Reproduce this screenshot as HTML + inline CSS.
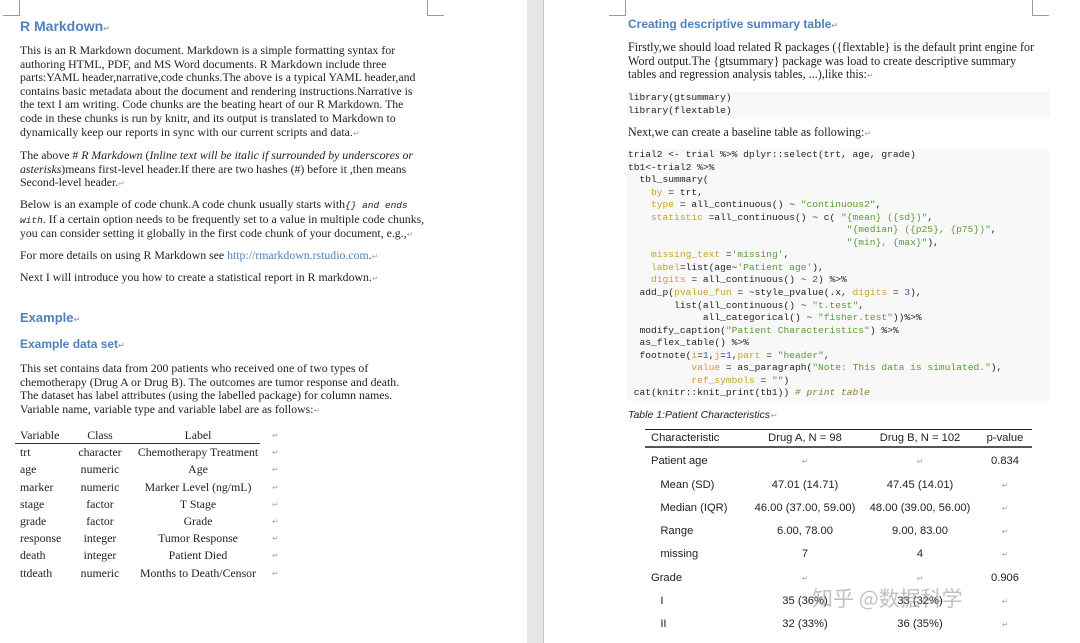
<!DOCTYPE html>
<html><head><meta charset="utf-8"><style>
*{margin:0;padding:0;box-sizing:border-box}
body{width:1080px;height:643px;overflow:hidden;background:#fff;position:relative;font-family:"Liberation Serif",serif;color:#222}
.a{position:absolute;white-space:nowrap}
.p{font-size:11.8px;line-height:13.6px;color:#222}
.r{font-size:12.1px}
h1,h2{position:absolute;font-family:"Liberation Sans",sans-serif;color:#4f81bd;font-weight:bold}
.m{color:#aaa;font-size:8px}
.code{position:absolute;background:#f8f8f8;font-family:"Liberation Mono",monospace;font-size:9.6px;line-height:12.55px;color:#222;white-space:pre;padding-left:1px}
.y{color:#c9a227}.g{color:#5a9a3a}.b{color:#3050c0}.c{color:#8a7a30;font-style:italic}
.s{font-family:"Liberation Sans",sans-serif;font-size:11.2px;color:#222}
</style></head><body>
<div class="a" style="left:527px;top:0;width:16px;height:643px;background:#e6e6e6"></div>
<div class="a" style="left:543px;top:0;width:1px;height:643px;background:#c8c8c8"></div>
<div class="a" style="left:19px;top:0;width:1px;height:16px;background:#999"></div>
<div class="a" style="left:3px;top:15px;width:17px;height:1px;background:#999"></div>
<div class="a" style="left:427px;top:0;width:1px;height:16px;background:#999"></div>
<div class="a" style="left:427px;top:15px;width:17px;height:1px;background:#999"></div>
<div class="a" style="left:625px;top:0;width:1px;height:16px;background:#999"></div>
<div class="a" style="left:609px;top:15px;width:17px;height:1px;background:#999"></div>
<div class="a" style="left:1032px;top:0;width:1px;height:16px;background:#999"></div>
<div class="a" style="left:1032px;top:15px;width:17px;height:1px;background:#999"></div>

<h1 style="left:20px;top:18px;font-size:14px">R Markdown<span class="m">↵</span></h1>
<div class="a p" style="left:20px;top:44px">This is an R Markdown document. Markdown is a simple formatting syntax for<br>authoring HTML, PDF, and MS Word documents. R Markdown include three<br>parts:YAML header,narrative,code chunks.The above is a typical YAML header,and<br>contains basic metadata about the document and rendering instructions.Narrative is<br>the text I am writing. Code chunks are the beating heart of our R Markdown. The<br>code in these chunks is run by knitr, and its output is translated to Markdown to<br>dynamically keep our reports in sync with our current scripts and data.<span class="m">↵</span></div>
<div class="a p" style="left:20px;top:149px">The above # <i>R Markdown</i> (<i>Inline text will be italic if surrounded by underscores or<br>asterisks</i>)means first-level header.If there are two hashes (#) before it ,then means<br>Second-level header.<span class="m">↵</span></div>
<div class="a p" style="left:20px;top:198px">Below is an example of code chunk.A code chunk usually starts with<i style="font-family:'Liberation Mono',monospace;font-size:9.5px">{} and ends<br>with</i>. If a certain option needs to be frequently set to a value in multiple code chunks,<br>you can consider setting it globally in the first code chunk of your document, e.g.,<span class="m">↵</span></div>
<div class="a p" style="left:20px;top:249px">For more details on using R Markdown see <span style="color:#4f81bd">http://rmarkdown.rstudio.com</span>.<span class="m">↵</span></div>
<div class="a p" style="left:20px;top:271px">Next I will introduce you how to create a statistical report in R markdown.<span class="m">↵</span></div>

<h1 style="left:20px;top:310px;font-size:13px">Example<span class="m">↵</span></h1>
<h2 style="left:20px;top:337px;font-size:12px">Example data set<span class="m">↵</span></h2>
<div class="a p" style="left:20px;top:362px">This set contains data from 200 patients who received one of two types of<br>chemotherapy (Drug A or Drug B). The outcomes are tumor response and death.<br>The dataset has label attributes (using the labelled package) for column names.<br>Variable name, variable type and variable label are as follows:<span class="m">↵</span></div>

<div class="a" style="left:15px;top:443px;width:245px;height:1px;background:#333"></div>
<div class="a p" style="left:20px;top:427px;line-height:17.2px">Variable<br>trt<br>age<br>marker<br>stage<br>grade<br>response<br>death<br>ttdeath</div>
<div class="a p" style="left:70px;top:427px;line-height:17.2px;text-align:center;width:60px">Class<br>character<br>numeric<br>numeric<br>factor<br>factor<br>integer<br>integer<br>numeric</div>
<div class="a p" style="left:126px;top:427px;line-height:17.2px;text-align:center;width:144px">Label<br>Chemotherapy Treatment<br>Age<br>Marker Level (ng/mL)<br>T Stage<br>Grade<br>Tumor Response<br>Patient Died<br>Months to Death/Censor</div>
<div class="a m" style="left:272px;top:427px;line-height:17.2px;white-space:pre">↵
↵
↵
↵
↵
↵
↵
↵
↵</div>

<h2 style="left:628px;top:17px;font-size:12px">Creating descriptive summary table<span class="m">↵</span></h2>
<div class="a p r" style="left:628px;top:41px">Firstly,we should load related R packages ({flextable} is the default print engine for<br>Word output.The {gtsummary} package was load to create descriptive summary<br>tables and regression analysis tables, ...),like this:<span class="m">↵</span></div>
<div class="code" style="left:627px;top:92px;width:423px;height:25px">library(gtsummary)
library(flextable)</div>
<div class="a p r" style="left:628px;top:126px">Next,we can create a baseline table as following:<span class="m">↵</span></div>
<div class="code" style="left:627px;top:149px;width:423px;height:252px">trial2 &lt;- trial %&gt;% dplyr::select(trt, age, grade)
tb1&lt;-trial2 %&gt;%
  tbl_summary(
    <span class="y">by</span> = trt,
    <span class="y">type</span> = all_continuous() ~ <span class="g">"continuous2"</span>,
    <span class="y">statistic</span> =all_continuous() ~ c( <span class="g">"{mean} ({sd})"</span>,
                                      <span class="g">"{median} ({p25}, {p75})"</span>,
                                      <span class="g">"{min}, {max}"</span>),
    <span class="y">missing_text</span> =<span class="g">'missing'</span>,
    <span class="y">label</span>=list(age~<span class="g">'Patient age'</span>),
    <span class="y">digits</span> = all_continuous() ~ <span class="b">2</span>) %&gt;%
  add_p(<span class="y">pvalue_fun</span> = ~style_pvalue(.x, <span class="y">digits</span> = <span class="b">3</span>),
        list(all_continuous() ~ <span class="g">"t.test"</span>,
             all_categorical() ~ <span class="g">"fisher.test"</span>))%&gt;%
  modify_caption(<span class="g">"Patient Characteristics"</span>) %&gt;%
  as_flex_table() %&gt;%
  footnote(<span class="y">i</span>=<span class="b">1</span>,<span class="y">j</span>=<span class="b">1</span>,<span class="y">part</span> = <span class="g">"header"</span>,
           <span class="y">value</span> = as_paragraph(<span class="g">"Note: This data is simulated."</span>),
           <span class="y">ref_symbols</span> = <span class="g">""</span>)
 cat(knitr::knit_print(tb1)) <span class="c"># print table</span></div>

<div class="a" style="left:628px;top:409px;font-style:italic;font-family:'Liberation Sans',sans-serif;font-size:10.5px">Table 1:Patient Characteristics<span class="m">↵</span></div>
<div class="a" style="left:645px;top:429px;width:387px;height:1px;background:#222"></div>
<div class="a" style="left:645px;top:446px;width:387px;height:2px;background:#555"></div>
<div class="a s" style="left:651px;top:427px;line-height:23.3px">Characteristic<br>Patient age<br>&nbsp;&nbsp;&nbsp;Mean (SD)<br>&nbsp;&nbsp;&nbsp;Median (IQR)<br>&nbsp;&nbsp;&nbsp;Range<br>&nbsp;&nbsp;&nbsp;missing<br>Grade<br>&nbsp;&nbsp;&nbsp;I<br>&nbsp;&nbsp;&nbsp;II</div>
<div class="a s" style="left:745px;top:427px;width:120px;text-align:center;line-height:23.3px">Drug A, N = 98<br><span class="m">↵</span><br>47.01 (14.71)<br>46.00 (37.00, 59.00)<br>6.00, 78.00<br>7<br><span class="m">↵</span><br>35 (36%)<br>32 (33%)</div>
<div class="a s" style="left:860px;top:427px;width:120px;text-align:center;line-height:23.3px">Drug B, N = 102<br><span class="m">↵</span><br>47.45 (14.01)<br>48.00 (39.00, 56.00)<br>9.00, 83.00<br>4<br><span class="m">↵</span><br>33 (32%)<br>36 (35%)</div>
<div class="a s" style="left:980px;top:427px;width:50px;text-align:center;line-height:23.3px">p-value<br>0.834<br><span class="m">↵</span><br><span class="m">↵</span><br><span class="m">↵</span><br><span class="m">↵</span><br>0.906<br><span class="m">↵</span><br><span class="m">↵</span></div>
<div class="a" style="left:812px;top:583px;font-family:'Noto Sans CJK SC',sans-serif;font-size:21px;color:rgba(140,140,140,.55)">知乎 @数据科学</div>
</body></html>
